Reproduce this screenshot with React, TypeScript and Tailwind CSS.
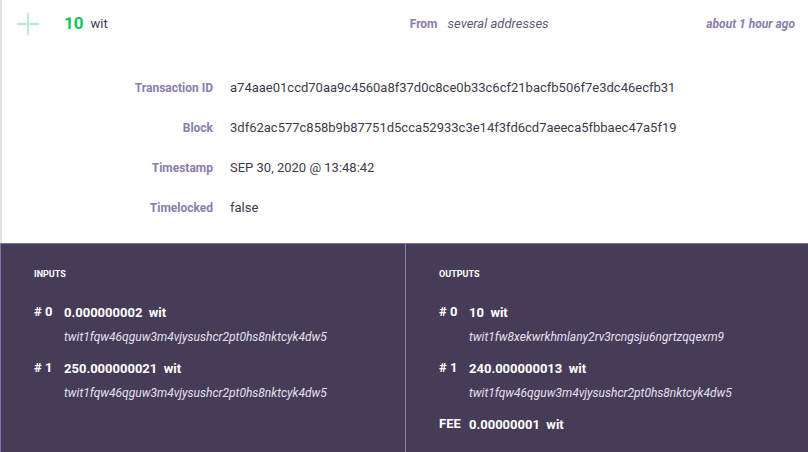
import React from "react";

const rows = [
  ["Transaction ID", "a74aae01ccd70aa9c4560a8f37d0c8ce0b33c6cf21bacfb506f7e3dc46ecfb31"],
  ["Block", "3df62ac577c858b9b87751d5cca52933c3e14f3fd6cd7aeeca5fbbaec47a5f19"],
  ["Timestamp", "SEP 30, 2020 @ 13:48:42"],
  ["Timelocked", "false"],
];

function Entry({ idx, amount, addr }: { idx: string; amount: string; addr?: string }) {
  return (
    <div className="flex items-start">
      <div className="w-[30px] shrink-0 text-[13px] font-bold leading-[18px] text-white -mt-[1px]">{idx}</div>
      <div className="flex flex-col">
        <div className="text-[13px] font-bold leading-[18px] text-white whitespace-pre">{amount}</div>
        {addr && (
          <div className="mt-[7px] text-[12px] italic leading-[16px] text-[#e4e0ee]">{addr}</div>
        )}
      </div>
    </div>
  );
}

export default function App() {
  return (
    <div className="w-[808px] h-[452px] overflow-hidden bg-white flex flex-col" style={{ fontFamily: "Roboto, 'Noto Sans', sans-serif" }}>
      <div className="h-[243px] border-l-2 border-[#e3e3e3] flex flex-col">
        <div className="flex items-center h-[47px] pl-[15px] pr-[13px]">
          <svg width="22" height="22" viewBox="0 0 22 22" className="shrink-0">
            <path d="M11 0V22M0 11H22" stroke="#b8ecd0" strokeWidth="2" />
          </svg>
          <span className="ml-[25px] text-[17px] font-bold text-[#12c15d]">10</span>
          <span className="ml-[7px] text-[13px] text-[#3e3a4c]">wit</span>
          <span className="ml-[302px] text-[12px] font-bold text-[#8a7dab]">From</span>
          <span className="ml-[10px] text-[13px] italic text-[#5f5878]">several addresses</span>
          <span className="ml-auto text-[12px] font-bold italic text-[#8a7dab]">about 1 hour ago</span>
        </div>
        <div className="flex flex-col gap-[22px] pt-[32px]">
          {rows.map(([k, v]) => (
            <div key={k} className="flex items-center h-[18px]">
              <div className="w-[211px] shrink-0 text-right text-[12px] font-bold text-[#8a7dab]">{k}</div>
              <div className="ml-[17px] text-[13px] text-[#3e3a4c]">{v}</div>
            </div>
          ))}
        </div>
      </div>
      <div className="flex-1 flex bg-[#463c58] border-t border-[#7f72a8]">
        <div className="w-[406px] border-l border-[#7f72a8] border-r border-r-[#8c80b4] pl-[33px] pt-[24px]">
          <div className="text-[9px] font-bold text-white leading-[12px]">INPUTS</div>
          <div className="mt-[24px] flex flex-col gap-[15px]">
            <Entry idx="# 0" amount="0.000000002  wit" addr="twit1fqw46qguw3m4vjysushcr2pt0hs8nktcyk4dw5" />
            <Entry idx="# 1" amount="250.000000021  wit" addr="twit1fqw46qguw3m4vjysushcr2pt0hs8nktcyk4dw5" />
          </div>
        </div>
        <div className="flex-1 pl-[33px] pt-[24px]">
          <div className="text-[9px] font-bold text-white leading-[12px]">OUTPUTS</div>
          <div className="mt-[24px] flex flex-col gap-[15px]">
            <Entry idx="# 0" amount="10  wit" addr="twit1fw8xekwrkhmlany2rv3rcngsju6ngrtzqqexm9" />
            <Entry idx="# 1" amount="240.000000013  wit" addr="twit1fqw46qguw3m4vjysushcr2pt0hs8nktcyk4dw5" />
            <Entry idx="FEE" amount="0.00000001  wit" />
          </div>
        </div>
      </div>
    </div>
  );
}
